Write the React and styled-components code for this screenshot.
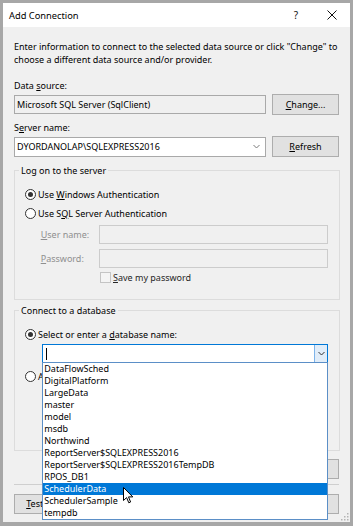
import React from "react";
import styled, { createGlobalStyle } from "styled-components";

const GlobalStyle = createGlobalStyle`
  html, body { margin: 0; padding: 0; background: #ffffff; }
  body {
    font-family: "Noto Sans", "Open Sans", sans-serif;
    font-size: 9px;
    color: #000;
  }
  * { box-sizing: border-box; }
`;

const Window = styled.div`
  position: relative;
  width: 353px;
  height: 526px;
  border: 3px solid #a7a7a7;
  border-bottom-width: 4px;
  background: #f0f0f0;
  display: flex;
  flex-direction: column;
  overflow: hidden;
`;

const TitleBar = styled.div`
  flex: none;
  height: 24px;
  background: #ffffff;
  display: flex;
  align-items: center;
  padding-left: 6px;
`;

const TitleText = styled.div`
  flex: 1;
  font-size: 9.3px;
`;

const TitleButton = styled.div`
  width: 36px;
  height: 100%;
  display: flex;
  align-items: center;
  justify-content: center;
  font-size: 10px;
  color: #111;
`;

const Body = styled.div`
  flex: 1;
  display: flex;
  flex-direction: column;
  padding: 13px 11px 0 11px;
  line-height: 13px;
`;

const Intro = styled.p`
  margin: 0;
  white-space: nowrap;
`;

const Key = styled.u`
  text-decoration: underline;
  text-decoration-thickness: 1px;
  text-underline-offset: 1px;
`;

const FieldLabel = styled.div`
  margin-top: ${(p) => p.$mt || 0}px;
  color: #000;
`;

const Row = styled.div`
  display: flex;
  align-items: center;
  gap: 6px;
  margin-top: ${(p) => p.$mt || 0}px;
  margin-left: ${(p) => p.$ml || 0}px;
`;

const TextBox = styled.div`
  flex: ${(p) => (p.$grow ? 1 : "none")};
  width: ${(p) => (p.$grow ? "auto" : "252px")};
  height: 19px;
  border: 1px solid ${(p) => (p.$disabled ? "#cccccc" : "#a9a9a9")};
  background: ${(p) => (p.$disabled || p.$readOnly ? "#f0f0f0" : "#ffffff")};
  display: flex;
  align-items: center;
  padding-left: 2px;
  white-space: nowrap;
  overflow: hidden;
`;

const ComboBox = styled.div`
  position: relative;
  flex: none;
  width: ${(p) => p.$width};
  height: ${(p) => p.$height}px;
  margin-top: ${(p) => p.$mt || 0}px;
  margin-left: ${(p) => p.$ml || 0}px;
  border: 1px solid ${(p) => (p.$focused ? "#0078d7" : "#a9a9a9")};
  background: #ffffff;
  display: flex;
  align-items: center;
  padding-left: 2px;
`;

const ComboText = styled.div`
  flex: 1;
  display: flex;
  align-items: center;
  white-space: nowrap;
`;

const Caret = styled.span`
  width: 1px;
  height: 12px;
  background: #000;
  margin-left: 1px;
`;

const ComboArrow = styled.div`
  flex: none;
  width: ${(p) => (p.$focused ? 13 : 17)}px;
  height: 100%;
  display: flex;
  align-items: center;
  justify-content: center;
  background: ${(p) => (p.$focused ? "#e1edf9" : "transparent")};
  border-left: ${(p) => (p.$focused ? "1px solid #7eb4ea" : "none")};
  color: ${(p) => (p.$focused ? "#333" : "#7a7a7a")};
`;

const Button = styled.button`
  flex: none;
  width: ${(p) => p.$width || 67}px;
  height: ${(p) => p.$height || 21}px;
  margin: 0;
  padding: 0;
  font: inherit;
  color: #000;
  background: #e1e1e1;
  border: 1px solid #adadad;
  border-radius: 0;
  display: flex;
  align-items: center;
  justify-content: center;
  white-space: nowrap;
`;

const Group = styled.fieldset`
  margin: ${(p) => p.$mt}px -1px 0 0;
  padding: ${(p) => p.$pt}px 11px ${(p) => p.$pb}px 10px;
  border: 1px solid #dcdcdc;
  display: flex;
  flex-direction: column;
  min-width: 0;
`;

const Legend = styled.legend`
  padding: 0 2px;
  margin-left: -6px;
  line-height: 13px;
`;

const RadioRow = styled.div`
  display: flex;
  align-items: center;
  gap: 2px;
  height: 13px;
  margin-top: ${(p) => p.$mt || 0}px;
  white-space: nowrap;
`;

const RadioCircle = styled.span`
  flex: none;
  width: 11px;
  height: 11px;
  border-radius: 50%;
  border: 1px solid #333;
  background: #fff;
  display: flex;
  align-items: center;
  justify-content: center;
  &::after {
    content: "";
    width: 5px;
    height: 5px;
    border-radius: 50%;
    background: ${(p) => (p.$checked ? "#333" : "transparent")};
  }
`;

const CredRow = styled.div`
  display: grid;
  grid-template-columns: 58.6px 1fr;
  align-items: center;
  margin: ${(p) => p.$mt}px 0 0 15.7px;
  color: #8f8f8f;
`;

const CheckRow = styled.div`
  display: flex;
  align-items: center;
  gap: 2px;
  height: 13px;
  margin: ${(p) => p.$mt}px 0 0 75px;
  color: #262626;
`;

const CheckBox = styled.span`
  flex: none;
  width: 11px;
  height: 11px;
  border: 1px solid #c4c4c4;
  background: #f4f4f4;
`;

const ActionRow = styled.div`
  display: flex;
  align-items: center;
  justify-content: flex-end;
  gap: 6px;
  margin-top: ${(p) => p.$mt}px;
`;

const Spacer = styled.div`
  flex: 1;
`;

const Separator = styled.div`
  margin-top: ${(p) => p.$mt}px;
  height: 1px;
  background: #cfcfcf;
`;

const DropList = styled.ul`
  position: absolute;
  z-index: 5;
  left: -1px;
  right: -1px;
  top: 100%;
  margin: 0;
  padding: 0;
  list-style: none;
  background: #ffffff;
  border: 1px solid #5b8fc7;
`;

const DropItem = styled.li`
  height: 12px;
  line-height: 12px;
  padding-left: 1.6px;
  white-space: nowrap;
  background: ${(p) => (p.$selected ? "#0078d7" : "transparent")};
  color: ${(p) => (p.$selected ? "#ffffff" : "#000000")};
`;

const Pointer = styled.svg`
  position: absolute;
  left: 80.5px;
  top: 123.5px;
`;

const Grip = styled.svg`
  position: absolute;
  right: 1px;
  bottom: 1px;
`;

const Chevron = () => (
  <svg width="7" height="5" viewBox="0 0 7 5">
    <polyline points="0.5,1 3.5,4 6.5,1" fill="none" stroke="currentColor" strokeWidth="1" />
  </svg>
);

const CloseIcon = () => (
  <svg width="10" height="10" viewBox="0 0 10 10">
    <line x1="0.5" y1="0.5" x2="9.5" y2="9.5" stroke="#111" strokeWidth="1" />
    <line x1="9.5" y1="0.5" x2="0.5" y2="9.5" stroke="#111" strokeWidth="1" />
  </svg>
);

const databases = [
  "DataFlowSched",
  "DigitalPlatform",
  "LargeData",
  "master",
  "model",
  "msdb",
  "Northwind",
  "ReportServer$SQLEXPRESS2016",
  "ReportServer$SQLEXPRESS2016TempDB",
  "RPOS_DB1",
  "SchedulerData",
  "SchedulerSample",
  "tempdb",
];

export default function App() {
  return (
    <>
      <GlobalStyle />
      <Window>
        <TitleBar>
          <TitleText>Add Connection</TitleText>
          <TitleButton>?</TitleButton>
          <TitleButton>
            <CloseIcon />
          </TitleButton>
        </TitleBar>
        <Body>
          <Intro>
            Enter information to connect to the selected data source or click "Change" to
            <br />
            choose a different data source and/or provider.
          </Intro>

          <FieldLabel $mt={13}>
            Data <Key>s</Key>ource:
          </FieldLabel>
          <Row $mt={2}>
            <TextBox $readOnly>Microsoft SQL Server (SqlClient)</TextBox>
            <Button>
              <span>
                <Key>C</Key>hange...
              </span>
            </Button>
          </Row>

          <FieldLabel $mt={6}>
            S<Key>e</Key>rver name:
          </FieldLabel>
          <Row $mt={2}>
            <ComboBox $width="252px" $height={20}>
              <ComboText>DYORDANOLAP\SQLEXPRESS2016</ComboText>
              <ComboArrow>
                <Chevron />
              </ComboArrow>
            </ComboBox>
            <Button>
              <span>
                <Key>R</Key>efresh
              </span>
            </Button>
          </Row>

          <Group $mt={6.5} $pt={11} $pb={15}>
            <Legend>Log on to the server</Legend>
            <RadioRow>
              <RadioCircle $checked />
              <span>
                Use <Key>W</Key>indows Authentication
              </span>
            </RadioRow>
            <RadioRow $mt={6}>
              <RadioCircle />
              <span>
                Use S<Key>Q</Key>L Server Authentication
              </span>
            </RadioRow>
            <CredRow $mt={5}>
              <span>
                <Key>U</Key>ser name:
              </span>
              <TextBox $grow $disabled />
            </CredRow>
            <CredRow $mt={5}>
              <span>
                <Key>P</Key>assword:
              </span>
              <TextBox $grow $disabled />
            </CredRow>
            <CheckRow $mt={3.5}>
              <CheckBox />
              <span>
                <Key>S</Key>ave my password
              </span>
            </CheckRow>
          </Group>

          <Group $mt={3.5} $pt={11} $pb={4.5}>
            <Legend>Connect to a database</Legend>
            <RadioRow>
              <RadioCircle $checked />
              <span>
                Select or enter a <Key>d</Key>atabase name:
              </span>
            </RadioRow>
            <ComboBox $width="286.6px" $height={19} $mt={3.5} $ml={16.7} $focused>
              <ComboText>
                <Caret />
              </ComboText>
              <ComboArrow $focused>
                <Chevron />
              </ComboArrow>
              <DropList>
                {databases.map((name) => (
                  <DropItem key={name} $selected={name === "SchedulerData"}>
                    {name}
                  </DropItem>
                ))}
                <Pointer width="11" height="17" viewBox="0 0 11 17">
                  <path
                    d="M0.5 0.5 L0.5 13.5 L3.6 10.6 L5.8 15.8 L7.6 15 L5.5 9.9 L9.8 9.9 Z"
                    fill="#ffffff"
                    stroke="#000000"
                    strokeWidth="1"
                    strokeLinejoin="round"
                  />
                </Pointer>
              </DropList>
            </ComboBox>
            <RadioRow $mt={6.5}>
              <RadioCircle />
              <span>
                Attac<Key>h</Key> a database file:
              </span>
            </RadioRow>
            <Row $mt={4} $ml={16.7}>
              <TextBox $grow />
            </Row>
            <Row $mt={21} $ml={16.7}>
              <TextBox $grow />
            </Row>
          </Group>

          <ActionRow $mt={8}>
            <Button $width={75} $height={20}>
              <span>
                Ad<Key>v</Key>anced...
              </span>
            </Button>
          </ActionRow>
          <Separator $mt={5} />
          <ActionRow $mt={8.5}>
            <Button $width={92} $height={20}>
              <span>
                <Key>T</Key>est Connection
              </span>
            </Button>
            <Spacer />
            <Button $width={75} $height={20}>
              OK
            </Button>
            <Button $width={75} $height={20}>
              Cancel
            </Button>
          </ActionRow>
        </Body>
        <Grip width="8" height="8" viewBox="0 0 8 8">
          <rect x="6" y="0" width="1.5" height="1.5" fill="#b3b3b3" />
          <rect x="3" y="3" width="1.5" height="1.5" fill="#b3b3b3" />
          <rect x="6" y="3" width="1.5" height="1.5" fill="#b3b3b3" />
          <rect x="0" y="6" width="1.5" height="1.5" fill="#b3b3b3" />
          <rect x="3" y="6" width="1.5" height="1.5" fill="#b3b3b3" />
          <rect x="6" y="6" width="1.5" height="1.5" fill="#b3b3b3" />
        </Grip>
      </Window>
    </>
  );
}
